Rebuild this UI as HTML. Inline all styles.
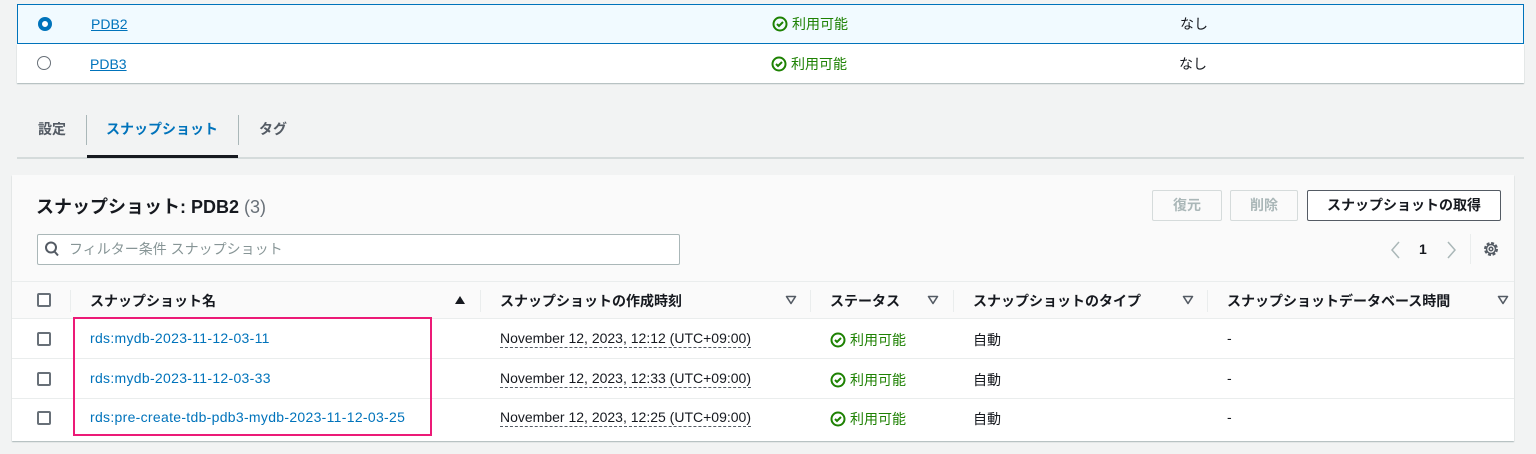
<!DOCTYPE html>
<html><head><meta charset="utf-8"><style>
*{box-sizing:border-box;margin:0;padding:0}
body{width:1536px;height:454px;background:#f2f3f3;font-family:"Liberation Sans","Noto Sans CJK JP",sans-serif;font-size:14px;color:#16191f;position:relative;overflow:hidden}
.a{position:absolute}
a{color:#0073bb}
.u{text-decoration:underline}
.row{position:absolute;left:17px;width:1507px;height:39px}
.t{position:absolute;top:50%;transform:translateY(-50%);white-space:nowrap}
.ok{color:#1d8102}
.ok svg{vertical-align:-3px;margin-right:4px}
.cb{position:absolute;width:14px;height:14px;border:2px solid #687078;border-radius:2px;background:#fff}
.btn{position:absolute;top:190px;height:31px;border:1px solid #d5dbdb;background:#fafafa;color:#aab7b8;font-weight:bold;text-align:center;line-height:29px;border-radius:2px}
.hd{font-weight:bold;color:#16191f}
.tri{position:absolute}
.dv{position:absolute;width:1px;background:#eaeded;top:290px;height:22px}
.dash{border-bottom:1px dashed #545b64;padding-bottom:1px}
.lk{color:#0073bb;letter-spacing:0.3px}
</style></head><body>
<div class="row" style="top:4px;background:#f1faff;border:1px solid #0073bb;height:40px">
 <div class="a" style="left:20px;top:12px;width:14px;height:14px;border-radius:50%;border:4px solid #0073bb;background:#fff"></div>
 <div class="t" style="left:73px"><a class="u">PDB2</a></div>
 <div class="t ok" style="left:754px"><svg width="16" height="16" viewBox="0 0 16 16"><circle cx="8" cy="8" r="6.5" fill="none" stroke="#1d8102" stroke-width="2"/><path d="M5 8l2 2 4-4" fill="none" stroke="#1d8102" stroke-width="2"/></svg>利用可能</div>
 <div class="t" style="left:1162px">なし</div>
</div>
<div class="row" style="top:44px;background:#fff;height:39px;box-shadow:0 1px 1px #aab7b8">
 <div class="a" style="left:20px;top:12px;width:14px;height:14px;border-radius:50%;border:1.5px solid #687078;background:#fff"></div>
 <div class="t" style="left:73px"><a class="u">PDB3</a></div>
 <div class="t ok" style="left:754px"><svg width="16" height="16" viewBox="0 0 16 16"><circle cx="8" cy="8" r="6.5" fill="none" stroke="#1d8102" stroke-width="2"/><path d="M5 8l2 2 4-4" fill="none" stroke="#1d8102" stroke-width="2"/></svg>利用可能</div>
 <div class="t" style="left:1162px">なし</div>
</div>
<div class="a" style="left:38px;top:119px;font-weight:bold;color:#545b64">設定</div>
<div class="a" style="left:86px;top:115px;width:1px;height:30px;background:#aab7b8"></div>
<div class="a" style="left:106px;top:119px;font-weight:bold;color:#0073bb">スナップショット</div>
<div class="a" style="left:238px;top:115px;width:1px;height:30px;background:#aab7b8"></div>
<div class="a" style="left:259px;top:119px;font-weight:bold;color:#545b64">タグ</div>
<div class="a" style="left:17px;top:157px;width:1507px;height:2px;background:#d5dbdb"></div>
<div class="a" style="left:87px;top:155px;width:151px;height:3px;background:#16191f"></div>

<div class="a" style="left:12px;top:175px;width:1502px;height:266px;background:#fff;box-shadow:0 1px 1px #aab7b8"></div>
<div class="a" style="left:12px;top:175px;width:1502px;height:144px;background:#fafafa;border-bottom:1px solid #eaeded"></div>
<div class="a" style="left:36px;top:193px;font-size:18px;font-weight:bold">スナップショット: PDB2 <span style="font-weight:normal;color:#687078">(3)</span></div>
<div class="btn" style="left:1152px;width:70px">復元</div>
<div class="btn" style="left:1230px;width:68px">削除</div>
<div class="btn" style="left:1307px;width:194px;border-color:#545b64;background:#fff;color:#16191f">スナップショットの取得</div>
<div class="a" style="left:37px;top:234px;width:643px;height:31px;border:1px solid #aab7b8;background:#fff;border-radius:2px"></div>
<svg class="a" style="left:44px;top:240px" width="16" height="18" viewBox="0 0 16 18"><circle cx="7" cy="7.5" r="5" fill="none" stroke="#545b64" stroke-width="2"/><path d="M10.5 11.5l3.5 4" stroke="#545b64" stroke-width="2"/></svg>
<div class="a" style="left:69px;top:239px;color:#879596">フィルター条件 スナップショット</div>
<svg class="a" style="left:1390px;top:241px" width="12" height="18"><path d="M9 1L2 9l7 8" fill="none" stroke="#aab7b8" stroke-width="1.5"/></svg>
<div class="a" style="left:1419px;top:241px;font-weight:bold">1</div>
<svg class="a" style="left:1445px;top:241px" width="12" height="18"><path d="M3 1l7 8-7 8" fill="none" stroke="#aab7b8" stroke-width="1.5"/></svg>
<div class="a" style="left:1470px;top:234px;width:1px;height:30px;background:#eaeded"></div>
<svg class="a" style="left:1482px;top:240px" width="18" height="18" viewBox="0 0 18 18"><circle cx="9" cy="9" r="6" fill="none" stroke="#545b64" stroke-width="2" stroke-dasharray="3 1.7"/><circle cx="9" cy="9" r="4.5" fill="none" stroke="#545b64" stroke-width="1.5"/><circle cx="9" cy="9" r="1.8" fill="none" stroke="#545b64" stroke-width="1.5"/></svg>
<div class="a" style="left:12px;top:281px;width:1502px;height:1px;background:#eaeded"></div>

<div class="cb" style="left:37px;top:293px"></div>
<div class="dv" style="left:70px"></div>
<div class="a hd" style="left:90px;top:291px">スナップショット名</div>
<svg class="tri" style="left:454px;top:295px" width="12" height="10"><path d="M1 9h10L6 1z" fill="#16191f"/></svg>
<div class="dv" style="left:480px"></div>
<div class="a hd" style="left:500px;top:291px">スナップショットの作成時刻</div>
<svg class="tri" style="left:785px;top:295px" width="12" height="10"><path d="M1.5 1.5h9L6 8.5z" fill="none" stroke="#545b64" stroke-width="1.6" stroke-linejoin="round"/></svg>
<div class="dv" style="left:810px"></div>
<div class="a hd" style="left:830px;top:291px">ステータス</div>
<svg class="tri" style="left:927px;top:295px" width="12" height="10"><path d="M1.5 1.5h9L6 8.5z" fill="none" stroke="#545b64" stroke-width="1.6" stroke-linejoin="round"/></svg>
<div class="dv" style="left:953px"></div>
<div class="a hd" style="left:973px;top:291px">スナップショットのタイプ</div>
<svg class="tri" style="left:1182px;top:295px" width="12" height="10"><path d="M1.5 1.5h9L6 8.5z" fill="none" stroke="#545b64" stroke-width="1.6" stroke-linejoin="round"/></svg>
<div class="dv" style="left:1207px"></div>
<div class="a hd" style="left:1227px;top:291px">スナップショットデータベース時間</div>
<svg class="tri" style="left:1497px;top:295px" width="12" height="10"><path d="M1.5 1.5h9L6 8.5z" fill="none" stroke="#545b64" stroke-width="1.6" stroke-linejoin="round"/></svg>

<div class="a" style="left:12px;top:358px;width:1502px;height:1px;background:#eaeded"></div>
<div class="a" style="left:12px;top:398px;width:1502px;height:1px;background:#eaeded"></div>

<div class="cb" style="left:37px;top:332px"></div>
<div class="a lk" style="left:90px;top:330px">rds:mydb-2023-11-12-03-11</div>
<div class="a" style="left:500px;top:330px"><span class="dash">November 12, 2023, 12:12 (UTC+09:00)</span></div>
<div class="a ok" style="left:830px;top:330px"><svg width="16" height="16" viewBox="0 0 16 16"><circle cx="8" cy="8" r="6.5" fill="none" stroke="#1d8102" stroke-width="2"/><path d="M5 8l2 2 4-4" fill="none" stroke="#1d8102" stroke-width="2"/></svg>利用可能</div>
<div class="a" style="left:973px;top:330px">自動</div>
<div class="a" style="left:1227px;top:330px">-</div>

<div class="cb" style="left:37px;top:372px"></div>
<div class="a lk" style="left:90px;top:370px">rds:mydb-2023-11-12-03-33</div>
<div class="a" style="left:500px;top:370px"><span class="dash">November 12, 2023, 12:33 (UTC+09:00)</span></div>
<div class="a ok" style="left:830px;top:370px"><svg width="16" height="16" viewBox="0 0 16 16"><circle cx="8" cy="8" r="6.5" fill="none" stroke="#1d8102" stroke-width="2"/><path d="M5 8l2 2 4-4" fill="none" stroke="#1d8102" stroke-width="2"/></svg>利用可能</div>
<div class="a" style="left:973px;top:370px">自動</div>
<div class="a" style="left:1227px;top:370px">-</div>

<div class="cb" style="left:37px;top:411px"></div>
<div class="a lk" style="left:90px;top:409px">rds:pre-create-tdb-pdb3-mydb-2023-11-12-03-25</div>
<div class="a" style="left:500px;top:409px"><span class="dash">November 12, 2023, 12:25 (UTC+09:00)</span></div>
<div class="a ok" style="left:830px;top:409px"><svg width="16" height="16" viewBox="0 0 16 16"><circle cx="8" cy="8" r="6.5" fill="none" stroke="#1d8102" stroke-width="2"/><path d="M5 8l2 2 4-4" fill="none" stroke="#1d8102" stroke-width="2"/></svg>利用可能</div>
<div class="a" style="left:973px;top:409px">自動</div>
<div class="a" style="left:1227px;top:409px">-</div>

<div class="a" style="left:73px;top:317px;width:359px;height:119px;border:2px solid #ec1a77"></div>
</body></html>
